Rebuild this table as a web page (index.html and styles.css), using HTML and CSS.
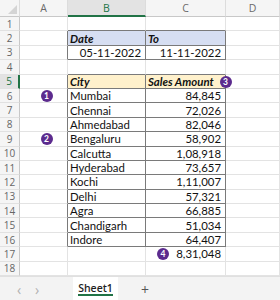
FILE: index.html
```html
<!DOCTYPE html>
<html>
<head>
<meta charset="utf-8">
<link rel="stylesheet" href="styles.css">
</head>
<body>
<div class="sheet">
  <div class="hd corner"><span class="tri"></span></div>
  <div class="hd">A</div>
  <div class="hd sel">B</div>
  <div class="hd">C</div>
  <div class="hd">D</div>

  <div class="rn">1</div><div class="c"></div><div class="c above"></div><div class="c above"></div><div class="c"></div>
  <div class="rn">2</div><div class="c leftof"></div><div class="c t th blue">Date</div><div class="c t th blue">To</div><div class="c"></div>
  <div class="rn">3</div><div class="c leftof"></div><div class="c t num">05-11-2022</div><div class="c t num">11-11-2022</div><div class="c"></div>
  <div class="rn">4</div><div class="c"></div><div class="c above"></div><div class="c above"></div><div class="c"></div>
  <div class="rn selrow">5</div><div class="c leftof"></div><div class="c t th yellow">City</div><div class="c t th yellow">Sales Amount<span class="badge b3">3</span></div><div class="c"></div>
  <div class="rn">6</div><div class="c leftof"><span class="badge b1">1</span></div><div class="c t">Mumbai</div><div class="c t num">84,845</div><div class="c"></div>
  <div class="rn">7</div><div class="c leftof"></div><div class="c t">Chennai</div><div class="c t num">72,026</div><div class="c"></div>
  <div class="rn">8</div><div class="c leftof"></div><div class="c t">Ahmedabad</div><div class="c t num">82,046</div><div class="c"></div>
  <div class="rn">9</div><div class="c leftof"><span class="badge b1">2</span></div><div class="c t">Bengaluru</div><div class="c t num">58,902</div><div class="c"></div>
  <div class="rn">10</div><div class="c leftof"></div><div class="c t">Calcutta</div><div class="c t num">1,08,918</div><div class="c"></div>
  <div class="rn">11</div><div class="c leftof"></div><div class="c t">Hyderabad</div><div class="c t num">73,657</div><div class="c"></div>
  <div class="rn">12</div><div class="c leftof"></div><div class="c t">Kochi</div><div class="c t num">1,11,007</div><div class="c"></div>
  <div class="rn">13</div><div class="c leftof"></div><div class="c t">Delhi</div><div class="c t num">57,321</div><div class="c"></div>
  <div class="rn">14</div><div class="c leftof"></div><div class="c t">Agra</div><div class="c t num">66,885</div><div class="c"></div>
  <div class="rn">15</div><div class="c leftof"></div><div class="c t">Chandigarh</div><div class="c t num">51,034</div><div class="c"></div>
  <div class="rn">16</div><div class="c leftof"></div><div class="c t">Indore</div><div class="c t num">64,407</div><div class="c"></div>
  <div class="rn">17</div><div class="c"></div><div class="c"></div><div class="c num"><span class="badge b4">4</span>8,31,048</div><div class="c"></div>
  <div class="rn">18</div><div class="c"></div><div class="c"></div><div class="c"></div><div class="c"></div>
</div>
<div class="tabs">
  <span class="nav">&lsaquo;</span>
  <span class="nav">&rsaquo;</span>
  <div class="tab"><span class="tabname">Sheet1</span></div>
  <span class="plus">+</span>
</div>
</body>
</html>
```
FILE: styles.css
```css
html, body {
  margin: 0;
  padding: 0;
  background: #ffffff;
}
body {
  width: 280px;
  height: 300px;
  overflow: hidden;
  font-family: Lato, "Open Sans", sans-serif;
}
.sheet {
  display: grid;
  grid-template-columns: 20px 48px 78px 80px 54px;
  grid-template-rows: 17px repeat(18, 14.4px);
}
.hd {
  background: #f5f5f5;
  border-right: 1px solid #dcdcdc;
  border-bottom: 1px solid #c8c8c8;
  box-sizing: border-box;
  color: #6a6a6a;
  font-size: 10.5px;
  display: flex;
  align-items: center;
  justify-content: center;
  font-family: "Open Sans", Lato, sans-serif;
}
.hd.sel {
  background: #e3e3e3;
  color: #217346;
  border-bottom: 2px solid #217346;
}
.corner {
  position: relative;
}
.tri {
  position: absolute;
  right: 2px;
  bottom: 2px;
  width: 0;
  height: 0;
  border-left: 9px solid transparent;
  border-bottom: 9px solid #d4d4d4;
}
.rn {
  background: #f5f5f5;
  border-right: 1px solid #c8c8c8;
  border-bottom: 1px solid #e1e1e1;
  box-sizing: border-box;
  color: #666;
  font-size: 10px;
  display: flex;
  align-items: center;
  justify-content: center;
  font-family: "Open Sans", Lato, sans-serif;
}
.rn.selrow {
  background: #e3e3e3;
  color: #217346;
  border-right: 2px solid #217346;
}
.c {
  position: relative;
  box-sizing: border-box;
  border-right: 1px solid #e3e3e3;
  border-bottom: 1px solid #e3e3e3;
  font-size: 11.4px;
  color: #111;
  padding: 0 2px;
  display: flex;
  align-items: center;
  white-space: nowrap;
}
.c.above {
  border-bottom-color: #7a7a7a;
}
.c.leftof {
  border-right-color: #7a7a7a;
}
.c.t {
  border-right-color: #7a7a7a;
  border-bottom-color: #7a7a7a;
}
.th {
  font-weight: bold;
  font-style: italic;
}
.blue {
  background: #d6def2;
}
.yellow {
  background: #fff1cc;
}
.num {
  justify-content: flex-end;
  padding-right: 4px;
}
.badge {
  position: absolute;
  width: 12px;
  height: 12px;
  border-radius: 50%;
  background: #5c2b8e;
  color: #fff;
  font-size: 8.5px;
  font-weight: bold;
  font-style: normal;
  display: flex;
  align-items: center;
  justify-content: center;
  top: 1px;
}
.b1 {
  left: 20.5px;
}
.b3 {
  right: -6.5px;
}
.b4 {
  right: 56px;
}
.tabs {
  height: 24px;
  background: #f3f3f3;
  border-top: 1px solid #e0e0e0;
  display: flex;
  align-items: center;
  font-family: "Open Sans", Lato, sans-serif;
}
.nav {
  color: #b0b0b0;
  font-size: 14px;
  width: 18px;
  text-align: center;
}
.nav:first-child {
  margin-left: 10px;
}
.tab {
  margin-left: 27px;
  width: 45px;
  height: 24px;
  background: #ffffff;
  display: flex;
  align-items: center;
  justify-content: center;
}
.tabname {
  font-size: 10.5px;
  font-weight: 600;
  color: #1f1f1f;
  border-bottom: 2px solid #217346;
  line-height: 12px;
}
.plus {
  margin-left: 23px;
  color: #555;
  font-size: 14px;
}
```
